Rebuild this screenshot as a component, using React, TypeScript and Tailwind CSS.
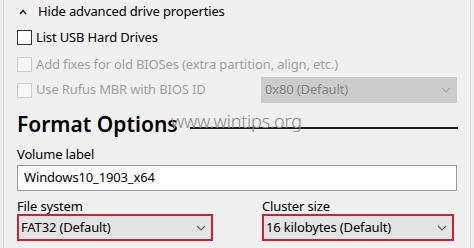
const Checkbox = ({ disabled = false }: { disabled?: boolean }) => (
  <div
    className={
      disabled
        ? 'w-[15px] h-[15px] shrink-0 border border-[#cccccc] bg-[#f6f6f6]'
        : 'w-[15px] h-[15px] shrink-0 border border-[#333333] bg-white'
    }
  />
);

const Chevron = ({ color = '#606060' }: { color?: string }) => (
  <svg width="10" height="6" viewBox="0 0 10 6" fill="none">
    <path d="M1 1l4 4 4-4" stroke={color} strokeWidth="1.1" />
  </svg>
);

const Combo = ({ value }: { value: string }) => (
  <div className="h-[27px] flex items-center justify-between border-2 border-[#d0202e] bg-[#e4e4e4] pl-[2px] pr-[5px]">
    <span className="text-black">{value}</span>
    <Chevron />
  </div>
);

export default function App() {
  return (
    <div className="w-[474px] h-[248px] overflow-hidden bg-[#f0f0f0] font-['Noto_Sans',sans-serif] text-[13px] tracking-[-0.15px] text-black">
      <div className="relative ml-[3px] w-[468px] h-full border-x border-[#d9d9d9] pl-[13px]">
        {/* advanced drive properties */}
        <div className="h-[24px] flex items-center">
          <svg className="ml-[2px]" width="8" height="6" viewBox="0 0 8 6" fill="none">
            <path d="M1 5l3-3.5L7 5" stroke="#222" strokeWidth="1.5" />
          </svg>
          <span className="ml-[11px]">Hide advanced drive properties</span>
        </div>

        <div className="mt-[6px] h-[15px] flex items-center gap-[4px]">
          <Checkbox />
          <span>List USB Hard Drives</span>
        </div>

        <div className="mt-[12px] h-[15px] flex items-center gap-[4px] text-[#a0a0a0]">
          <Checkbox disabled />
          <span>Add fixes for old BIOSes (extra partition, align, etc.)</span>
        </div>

        <div className="mt-[5px] w-[440px] grid grid-cols-[196px_1fr] gap-x-[48px]">
          <div className="flex items-center gap-[4px] text-[#a0a0a0]">
            <Checkbox disabled />
            <span>Use Rufus MBR with BIOS ID</span>
          </div>
          <div className="h-[26px] flex items-center justify-between bg-[#cccccc] pl-[4px] pr-[6px] text-[#838383]">
            <span>0x80 (Default)</span>
            <Chevron color="#a9a9a9" />
          </div>
        </div>

        {/* format options */}
        <div className="mt-[7px] w-[441px] flex items-start">
          <h2 className="text-[21px] leading-[28px] font-semibold tracking-[0px]">Format Options</h2>
          <div className="flex-1 ml-[12px] mt-[17px] h-[2px] bg-[#1c1c1c]" />
        </div>
        <span className="absolute left-[167px] top-[111px] text-[18px] leading-[20px] font-light tracking-[-0.2px] text-[#8a8a8a]">
          www.wintips.org
        </span>

        <div className="mt-[8px] leading-[16px]">Volume label</div>
        <div className="mt-[3px] w-[440px] h-[26px] flex items-center border border-[#9a9a9a] bg-white pl-[6px]">
          Windows10_1903_x64
        </div>

        <div className="mt-[7px] w-[437px] grid grid-cols-[196px_1fr] gap-x-[49px]">
          <div className="leading-[16px]">File system</div>
          <div className="leading-[16px]">Cluster size</div>
          <Combo value="FAT32 (Default)" />
          <Combo value="16 kilobytes (Default)" />
        </div>
      </div>
    </div>
  );
}
